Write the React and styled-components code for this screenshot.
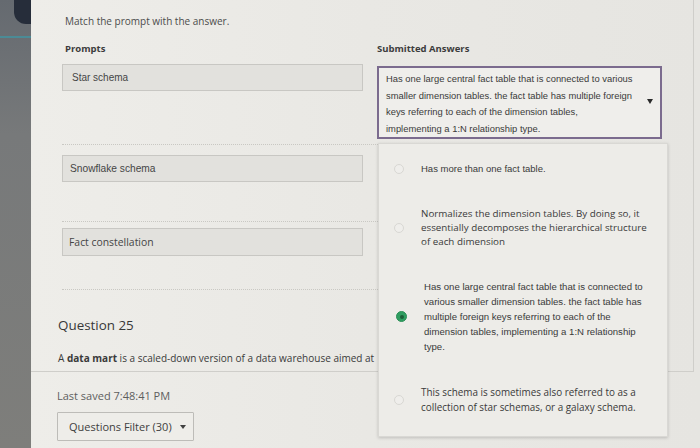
import React from "react";
import styled, { createGlobalStyle } from "styled-components";

const GlobalStyle = createGlobalStyle`
  html, body { margin: 0; padding: 0; overflow: hidden; }
  body { font-family: "Open Sans", "Liberation Sans", sans-serif; }
  * { box-sizing: border-box; }
`;

const Screen = styled.div`
  width: 700px;
  height: 448px;
  display: flex;
  overflow: hidden;
  background: #e8e7e3;
`;

const SideStrip = styled.div`
  width: 31px;
  flex: none;
  display: flex;
  flex-direction: column;
  background: linear-gradient(180deg, #656a70 0%, #77797a 30%, #7e7e7b 100%);
`;

const WindowTab = styled.div`
  margin-left: 14px;
  width: 19px;
  height: 24px;
  background: #262d3a;
  border-radius: 0 0 0 12px;
`;

const TealLine = styled.div`
  margin-top: 12px;
  height: 2px;
  background: #4b8b96;
`;

const Page = styled.div`
  flex: 1;
  display: flex;
  flex-direction: column;
  background: linear-gradient(90deg, #eeede9 0%, #e9e8e4 50%, #e6e5e1 100%);
`;

const QuestionPanel = styled.section`
  margin-right: 6px;
  padding: 14px 0 6px 31px;
  border-right: 1px solid #cfceca;
  border-bottom: 1px solid #cfceca;
`;

const Instruction = styled.p`
  margin: 0 0 13px 3px;
  font-size: 10px;
  line-height: 14px;
  color: #4c4c4c;
`;

const MatchGrid = styled.div`
  display: grid;
  grid-template-columns: 301px 285px;
  column-gap: 14px;
`;

const ColumnHead = styled.div`
  font-size: 9.5px;
  line-height: 16px;
  font-weight: 700;
  color: #3c3c3c;
  padding-left: ${(p) => p.$indent || 0}px;
  padding-bottom: 1px;
`;

const MatchRow = styled.div`
  grid-column: 1 / -1;
  display: grid;
  grid-template-columns: 301px 285px;
  column-gap: 14px;
  align-items: start;
  height: ${(p) => p.$height}px;
  padding-top: ${(p) => p.$padTop}px;
  border-bottom: 1px dotted #c9c8c3;
`;

const PromptBox = styled.div`
  height: ${(p) => p.$h || 27}px;
  display: flex;
  align-items: center;
  padding-left: ${(p) => p.$indent || 9}px;
  background: #e2e1dd;
  border: 1px solid #c8c7c3;
  font-family: ${(p) =>
    p.$sans ? '"Open Sans", sans-serif' : '"Liberation Sans", Arial, sans-serif'};
  font-size: ${(p) => p.$size || 10}px;
  color: #454545;
`;

const AnswerCell = styled.div`
  position: relative;
  margin-top: 2px;
`;

const AnswerSelect = styled.div`
  position: relative;
  height: 73px;
  padding: 3px 24px 0 7px;
  background: #efeeeb;
  border: 2px solid #7b6b8e;
  font-family: "Liberation Sans", Arial, sans-serif;
  font-size: 9.4px;
  line-height: 16.6px;
  color: #3a3a3a;
`;

const Caret = styled.span`
  position: absolute;
  right: 7px;
  top: 31px;
  width: 0;
  height: 0;
  border-left: 3.5px solid transparent;
  border-right: 3.5px solid transparent;
  border-top: 5px solid #2a2a2a;
`;

const Popover = styled.div`
  position: absolute;
  top: 77px;
  left: 1px;
  width: 290px;
  height: 294px;
  z-index: 5;
  padding: 18px 12px 0 15px;
  display: flex;
  flex-direction: column;
  gap: 30px;
  background: #edece8;
  border: 1px solid #d9d8d4;
  box-shadow: 0 1px 3px rgba(0, 0, 0, 0.18);
`;

const Option = styled.div`
  display: flex;
  align-items: center;
  gap: 17px;
`;

const Radio = styled.span`
  flex: none;
  width: ${(p) => (p.$checked ? 11 : 10)}px;
  height: ${(p) => (p.$checked ? 11 : 10)}px;
  border-radius: 50%;
  border: 1px solid ${(p) => (p.$checked ? "#2a8f56" : "#d8d7d3")};
  background: ${(p) => (p.$checked ? "#2f9d60" : "#efeeeb")};
  display: flex;
  align-items: center;
  justify-content: center;
  margin-left: ${(p) => p.$shift || 0}px;
  &::after {
    content: "";
    display: ${(p) => (p.$checked ? "block" : "none")};
    width: 4px;
    height: 4px;
    border-radius: 50%;
    background: #1c5f38;
  }
`;

const OptionText = styled.div`
  width: 228px;
  font-family: ${(p) =>
    p.$sans ? '"Open Sans", sans-serif' : '"Liberation Sans", Arial, sans-serif'};
  font-size: ${(p) => p.$size}px;
  line-height: ${(p) => p.$lh || 14.5}px;
  color: #3a3a3a;
`;

const QuestionTitle = styled.h2`
  margin: 26px 0 0 -4px;
  font-size: 13.4px;
  line-height: 18px;
  font-weight: 400;
  color: #383838;
`;

const QuestionText = styled.p`
  margin: 17px 0 0 -4px;
  font-size: 10px;
  line-height: 14px;
  color: #3a3a3a;
  white-space: nowrap;
  b { font-weight: 700; }
`;

const Footer = styled.footer`
  padding: 16px 0 0 26px;
  display: flex;
  flex-direction: column;
  align-items: flex-start;
  gap: 9px;
`;

const SavedNote = styled.div`
  font-size: 11px;
  line-height: 15px;
  color: #5e5e5e;
`;

const FilterButton = styled.button`
  height: 29px;
  width: 137px;
  padding: 0 0 0 11px;
  display: flex;
  align-items: center;
  gap: 8px;
  background: #eeede9;
  border: 1px solid #bdbcb8;
  border-radius: 1px;
  font-family: "Open Sans", sans-serif;
  font-size: 11px;
  color: #404040;
`;

const SmallCaret = styled.span`
  width: 0;
  height: 0;
  border-left: 3px solid transparent;
  border-right: 3px solid transparent;
  border-top: 4px solid #404040;
`;

const options = [
  { text: "Has more than one fact table.", sans: false, size: 9.5 },
  {
    text: "Normalizes the dimension tables. By doing so, it essentially decomposes the hierarchical structure of each dimension",
    sans: true,
    size: 9.8,
    lh: 14,
  },
  {
    text: "Has one large central fact table that is connected to various smaller dimension tables. the fact table has multiple foreign keys referring to each of the dimension tables, implementing a 1:N relationship type.",
    sans: false,
    size: 9.6,
    checked: true,
    lh: 15.2,
  },
  {
    text: "This schema is sometimes also referred to as a collection of star schemas, or a galaxy schema.",
    sans: true,
    size: 9.9,
    lh: 15,
  },
];

export default function App() {
  return (
    <>
      <GlobalStyle />
      <Screen>
        <SideStrip>
          <WindowTab />
          <TealLine />
        </SideStrip>
        <Page>
          <QuestionPanel>
            <Instruction>Match the prompt with the answer.</Instruction>
            <MatchGrid>
              <ColumnHead $indent={3}>Prompts</ColumnHead>
              <ColumnHead>Submitted Answers</ColumnHead>
              <MatchRow $height={87} $padTop={6}>
                <PromptBox>Star schema</PromptBox>
                <AnswerCell>
                  <AnswerSelect>
                    Has one large central fact table that is connected to various
                    smaller dimension tables. the fact table has multiple foreign
                    keys referring to each of the dimension tables, implementing a
                    1:N relationship type.
                    <Caret />
                  </AnswerSelect>
                  <Popover>
                    {options.map((o, i) => (
                      <Option key={i}>
                        <Radio $checked={o.checked} $shift={o.checked ? 2 : 0} />
                        <OptionText $sans={o.sans} $lh={o.lh} $size={o.size}>
                          {o.text}
                        </OptionText>
                      </Option>
                    ))}
                  </Popover>
                </AnswerCell>
              </MatchRow>
              <MatchRow $height={77} $padTop={10}>
                <PromptBox $indent={7} $size={10.2}>Snowflake schema</PromptBox>
              </MatchRow>
              <MatchRow $height={68} $padTop={6}>
                <PromptBox $sans $indent={6} $h={28} $size={10.4}>
                  Fact constellation
                </PromptBox>
              </MatchRow>
            </MatchGrid>
            <QuestionTitle>Question 25</QuestionTitle>
            <QuestionText>
              A <b>data mart</b> is a scaled-down version of a data warehouse aimed at
            </QuestionText>
          </QuestionPanel>
          <Footer>
            <SavedNote>Last saved 7:48:41 PM</SavedNote>
            <FilterButton>
              Questions Filter (30) <SmallCaret />
            </FilterButton>
          </Footer>
        </Page>
      </Screen>
    </>
  );
}
